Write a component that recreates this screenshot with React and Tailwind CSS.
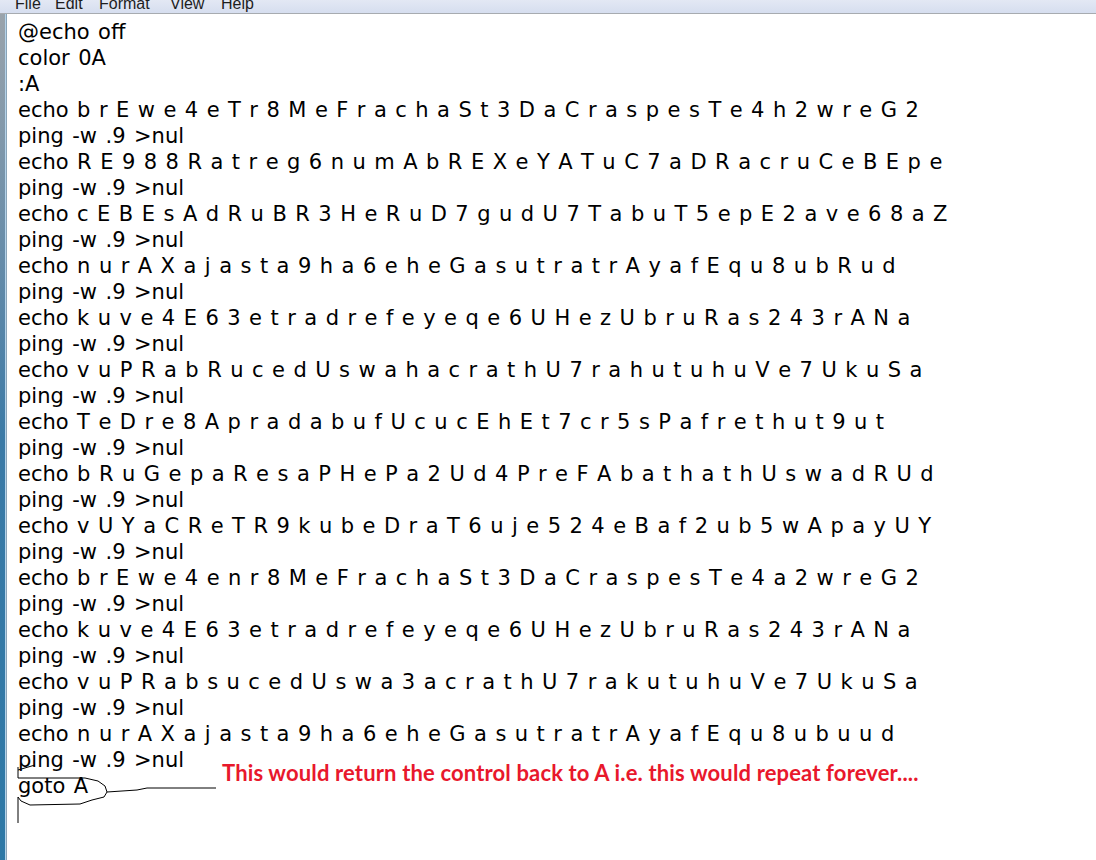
const lines = [
  "@echo off",
  "color 0A",
  ":A",
  "echo b r E w e 4 e T r 8 M e F r a c h a S t 3 D a C r a s p e s T e 4 h 2 w r e G 2",
  "ping -w .9 >nul",
  "echo R E 9 8 8 R a t r e g 6 n u m A b R E X e Y A T u C 7 a D R a c r u C e B E p e",
  "ping -w .9 >nul",
  "echo c E B E s A d R u B R 3 H e R u D 7 g u d U 7 T a b u T 5 e p E 2 a v e 6 8 a Z",
  "ping -w .9 >nul",
  "echo n u r A X a j a s t a 9 h a 6 e h e G a s u t r a t r A y a f E q u 8 u b R u d",
  "ping -w .9 >nul",
  "echo k u v e 4 E 6 3 e t r a d r e f e y e q e 6 U H e z U b r u R a s 2 4 3 r A N a",
  "ping -w .9 >nul",
  "echo v u P R a b R u c e d U s w a h a c r a t h U 7 r a h u t u h u V e 7 U k u S a",
  "ping -w .9 >nul",
  "echo T e D r e 8 A p r a d a b u f U c u c E h E t 7 c r 5 s P a f r e t h u t 9 u t",
  "ping -w .9 >nul",
  "echo b R u G e p a R e s a P H e P a 2 U d 4 P r e F A b a t h a t h U s w a d R U d",
  "ping -w .9 >nul",
  "echo v U Y a C R e T R 9 k u b e D r a T 6 u j e 5 2 4 e B a f 2 u b 5 w A p a y U Y",
  "ping -w .9 >nul",
  "echo b r E w e 4 e n r 8 M e F r a c h a S t 3 D a C r a s p e s T e 4 a 2 w r e G 2",
  "ping -w .9 >nul",
  "echo k u v e 4 E 6 3 e t r a d r e f e y e q e 6 U H e z U b r u R a s 2 4 3 r A N a",
  "ping -w .9 >nul",
  "echo v u P R a b s u c e d U s w a 3 a c r a t h U 7 r a k u t u h u V e 7 U k u S a",
  "ping -w .9 >nul",
  "echo n u r A X a j a s t a 9 h a 6 e h e G a s u t r a t r A y a f E q u 8 u b u u d",
  "ping -w .9 >nul",
  "goto A",
];

// menu items with the width each one takes up in the bar
const menu = [
  ["File", "w-[40px]"],
  ["Edit", "w-[44px]"],
  ["Format", "w-[71px]"],
  ["View", "w-[51px]"],
  ["Help", "w-[50px]"],
];

export default function App() {
  return (
    <div className="relative w-[1096px] h-[860px] overflow-hidden bg-white flex flex-col">
      {/* menu bar, cut off at the top */}
      <div className="h-[14px] shrink-0 bg-gradient-to-b from-[#e3e8f4] to-[#d6deef] border-b border-[#a7abb0] overflow-hidden flex items-end pl-[15px] font-['Liberation_Sans',sans-serif] text-[16px] leading-[16px] text-[#1e1e1e]">
        {menu.map(([m, w]) => (
          <span key={m} className={`${w} shrink-0 mb-[1px]`}>{m}</span>
        ))}
      </div>
      <div className="flex flex-1">
        <div className="w-[7px] shrink-0 flex">
          <div className="w-[5px] bg-gradient-to-b from-[#9aa3ab] via-[#3b7aa6] to-[#2d78a6]" />
          <div className="w-[1px] bg-[#b5d3ea]" />
          <div className="w-[1px] bg-[#8aa4b8]" />
        </div>
        <div className="pl-[11px] pt-[5px] font-['DejaVu_Sans',sans-serif] text-[21px] leading-[26px] [word-spacing:1.8px] text-black whitespace-pre">
          {lines.map((l, i) => (
            <div key={i}>{l}</div>
          ))}
        </div>
      </div>

      <div className="absolute left-[222px] top-[761px] font-['Lato',sans-serif] font-bold text-[22px] leading-[24px] tracking-[0.15px] text-[#e8182c] whitespace-nowrap">
        This would return the control back to A i.e. this would repeat forever....
      </div>

      {/* hand-drawn annotation around "goto A" */}
      <svg className="absolute left-0 top-0" width="1096" height="860" fill="none" stroke="#000" strokeWidth="1">
        <polyline points="18,770 35,765" />
        <polyline points="18,767 18,778" />
        <polyline points="18,797 18,823" />
        <polyline points="18,778 85,778 98,781 105,786 107,792 104,797 92,800 80,804 30,805 21,801 18,797" />
        <polyline points="107,792 137,790 147,788 216,788" />
      </svg>
    </div>
  );
}
